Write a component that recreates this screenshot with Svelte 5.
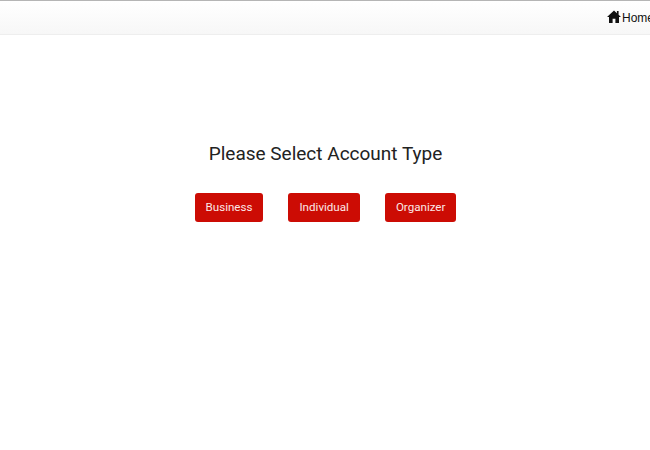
<script>
    const accountTypes = ['Business', 'Individual', 'Organizer'];
</script>

<div class="page">
    <nav class="topbar">
        <a class="home-link" href="#home">
            <svg class="home-icon" viewBox="0 0 14 13" aria-hidden="true">
                <path d="M7 0.5 L0 7 H2 V13 H5.6 V8.8 H8.4 V13 H12 V7 H14 L11.6 4.8 V1 H9.9 V3.2 Z" />
            </svg>
            <span>Home</span>
        </a>
    </nav>

    <main class="select-type">
        <h2>Please Select Account Type</h2>
        <div class="buttons">
            {#each accountTypes as type}
                <button type="button" class="type-btn">{type}</button>
            {/each}
        </div>
    </main>
</div>

<style>
    :global(body) {
        margin: 0;
        background: #fff;
    }

    .page {
        width: 650px;
        height: 450px;
        overflow: hidden;
        font-family: Roboto, "Liberation Sans", sans-serif;
    }

    .topbar {
        height: 33px;
        display: flex;
        justify-content: flex-end;
        align-items: center;
        border-top: 1px solid #b5b5b5;
        border-bottom: 1px solid #eeeeee;
        background: linear-gradient(to bottom, #ffffff, #f7f7f7);
        overflow: hidden;
    }

    .home-link {
        display: flex;
        align-items: center;
        gap: 1px;
        width: 43px;
        flex: none;
        color: #111;
        font-size: 12px;
        font-family: "Liberation Sans", sans-serif;
        text-decoration: none;
        white-space: nowrap;
    }

    .home-icon {
        width: 14px;
        height: 13px;
        flex: none;
        fill: #111;
        margin-top: -3px;
    }

    .select-type {
        display: flex;
        flex-direction: column;
        align-items: center;
        padding-top: 108px;
        padding-left: 1px;
    }

    h2 {
        margin: 0;
        font-size: 19px;
        font-weight: 400;
        line-height: 22px;
        color: #222;
    }

    .buttons {
        display: flex;
        gap: 25px;
        margin-top: 28px;
    }

    .type-btn {
        height: 29px;
        padding: 0 11px 2px;
        border: none;
        border-radius: 3px;
        background: #cc0c04;
        color: #fbe9e7;
        font-family: inherit;
        font-size: 11.6px;
        cursor: pointer;
    }
</style>
